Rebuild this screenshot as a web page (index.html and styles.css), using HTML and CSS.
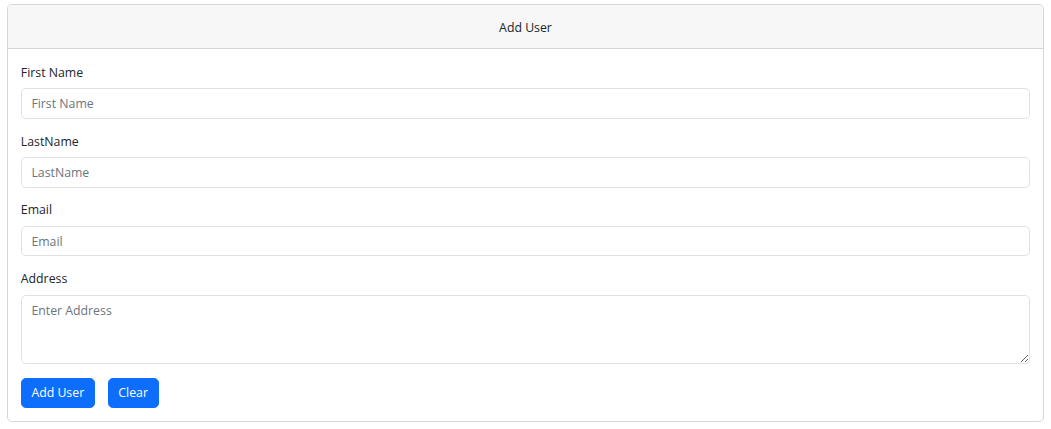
FILE: index.html
```html
<!DOCTYPE html>
<html lang="en">
<head>
<meta charset="utf-8">
<title>Add User</title>
<link rel="stylesheet" href="styles.css">
</head>
<body>
<div class="card">
  <div class="card-header">Add User</div>
  <form class="card-body">
    <div class="field">
      <label class="label" for="fn">First Name</label>
      <input class="control" id="fn" type="text" placeholder="First Name">
    </div>
    <div class="field">
      <label class="label" for="ln">LastName</label>
      <input class="control" id="ln" type="text" placeholder="LastName">
    </div>
    <div class="field">
      <label class="label" for="em">Email</label>
      <input class="control" id="em" type="email" placeholder="Email">
    </div>
    <div class="field">
      <label class="label" for="ad">Address</label>
      <textarea class="control area" id="ad" rows="3" placeholder="Enter Address"></textarea>
    </div>
    <div class="actions">
      <button class="btn" type="button">Add User</button>
      <button class="btn" type="button">Clear</button>
    </div>
  </form>
</div>
</body>
</html>
```

FILE: styles.css
```css
html, body {
  margin: 0;
  background: #ffffff;
}
body {
  padding: 4px 7px 0 7px;
  font-family: "Open Sans", "Noto Sans", sans-serif;
  font-size: 12.3px;
  line-height: 19.2px;
  color: #212529;
}
.card {
  border: 1px solid #d6d6d6;
  border-radius: 4.8px;
  overflow: hidden;
}
.card-header {
  background: #f7f7f7;
  border-bottom: 1px solid #d6d6d6;
  text-align: center;
  padding: 12.5px 16px 11.5px;
  line-height: 19px;
}
.card-body {
  margin: 0;
  padding: 13.8px 12.8px 12.8px;
  display: flex;
  flex-direction: column;
}
.field {
  display: flex;
  flex-direction: column;
  margin-bottom: 12.8px;
}
.label {
  margin-bottom: 6.4px;
}
.control {
  font: inherit;
  color: #212529;
  border: 1px solid #dee2e6;
  border-radius: 4.8px;
  padding: 4.8px 9.6px;
  height: 30.4px;
  box-sizing: border-box;
  outline: none;
  background: #fff;
  margin: 0;
}
.control::placeholder {
  color: #6c757d;
  opacity: 1;
}
.area {
  height: 69px;
  resize: vertical;
  display: block;
}
.actions {
  display: flex;
  gap: 13px;
  margin-top: 1px;
}
.btn {
  font: inherit;
  color: #fff;
  background: #0d6efd;
  border: 1px solid #0d6efd;
  border-radius: 4.8px;
  padding: 4.8px 9.6px;
  height: 30.4px;
  line-height: 19.2px;
  cursor: pointer;
}
```
